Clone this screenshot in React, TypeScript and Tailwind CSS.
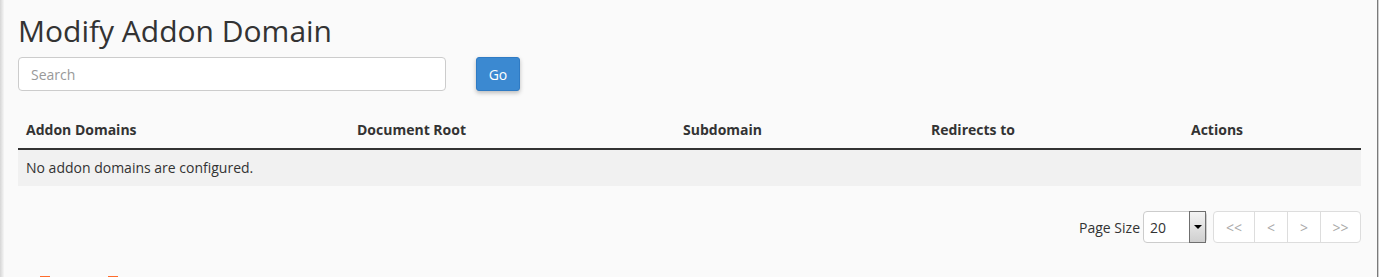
import React from 'react'

const columns = [
  { label: 'Addon Domains', width: 'w-[331px]' },
  { label: 'Document Root', width: 'w-[326px]' },
  { label: 'Subdomain', width: 'w-[248px]' },
  { label: 'Redirects to', width: 'w-[260px]' },
  { label: 'Actions', width: '' },
]

const pages = [
  { label: '<<', width: 'w-[40px]' },
  { label: '<', width: 'w-[33px]' },
  { label: '>', width: 'w-[33px]' },
  { label: '>>', width: 'w-[40px]' },
]

export default function App() {
  return (
    <div
      className="flex h-[277px] w-[1379px] overflow-hidden bg-[#fafafa] text-[#333]"
      style={{ fontFamily: '"Open Sans", "Noto Sans", sans-serif' }}
    >
      <div className="w-[4px] shrink-0 bg-gradient-to-r from-[#d6d6d6] to-[#f6f6f6]" />

      <div className="flex flex-1 flex-col pl-[14px] pr-[16px]">
        <h1 className="mt-[14px] text-[30px] leading-[33px] font-normal text-[#333]">Modify Addon Domain</h1>

        <div className="mt-[10px] flex items-center">
          <input
            placeholder="Search"
            className="h-[34px] w-[428px] rounded-[4px] border border-[#ccc] bg-white px-[12px] text-[14px] text-[#555] placeholder:text-[#999] focus:outline-none"
          />
          <button className="ml-[30px] h-[34px] w-[44px] rounded-[3px] border border-[#2f7bc4] bg-[#3b89d1] text-[14px] text-white shadow-[0_2px_4px_rgba(0,0,0,0.25)]">
            Go
          </button>
        </div>

        <table className="mt-[21px] w-full border-collapse text-[14px] leading-[20px]">
          <thead>
            <tr className="border-b-2 border-[#333]">
              {columns.map((c) => (
                <th key={c.label} className={`${c.width} p-[8px] text-left font-bold text-[#333]`}>
                  {c.label}
                </th>
              ))}
            </tr>
          </thead>
          <tbody>
            <tr className="bg-[#f1f1f1]">
              <td colSpan={5} className="p-[8px] text-[#333]">
                No addon domains are configured.
              </td>
            </tr>
          </tbody>
        </table>

        <div className="mt-[25px] flex items-center justify-end text-[14px]">
          <span className="mr-[3px] text-[#333]">Page Size</span>
          <div className="flex h-[32px] w-[64px] items-center rounded-[4px] border border-[#ccc] bg-white">
            <span className="flex-1 pl-[6px] text-[#333]">20</span>
            <div className="flex h-[32px] w-[17px] items-center justify-center border border-[#6f6f6f] bg-gradient-to-b from-[#f4f4f4] to-[#cfcfcf]">
              <span className="h-0 w-0 border-x-[4px] border-t-[4px] border-x-transparent border-t-black" />
            </div>
          </div>
          <div className="ml-[6px] flex h-[32px] overflow-hidden rounded-[4px] border border-[#ddd] bg-white">
            {pages.map((p, i) => (
              <span
                key={p.label}
                className={`${p.width} flex items-center justify-center text-[#aaa] ${i > 0 ? 'border-l border-[#ddd]' : ''}`}
              >
                {p.label}
              </span>
            ))}
          </div>
        </div>

        <svg className="mt-[33px] ml-[22px] shrink-0" width="110" height="10" viewBox="0 0 110 10">
          <rect x="0" y="0" width="10" height="10" fill="#ff6c2c" />
          <rect x="68" y="0" width="10" height="10" fill="#ff6c2c" />
        </svg>
      </div>

      <div className="w-[1px] shrink-0 bg-[#7a7a7a]" />
      <div className="w-[1px] shrink-0 bg-[#cfcfcf]" />
    </div>
  )
}
